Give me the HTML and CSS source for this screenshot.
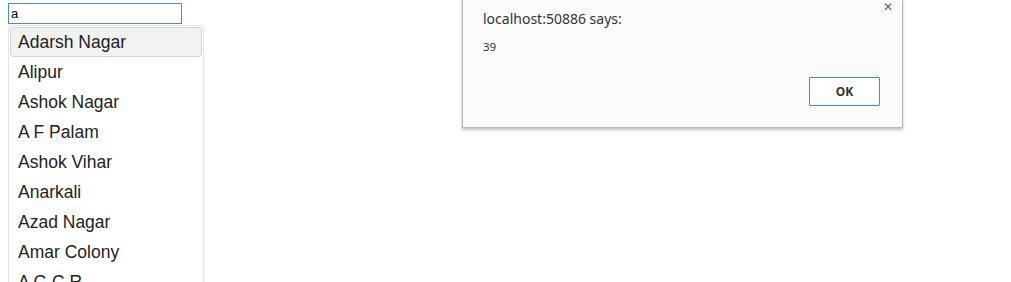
FILE: index.html
```html
<!DOCTYPE html>
<html>
<head>
<meta charset="utf-8">
<link rel="stylesheet" href="styles.css">
</head>
<body>
<div class="page">
  <input class="search" type="text" value="a">
  <ul class="menu">
    <li class="item active">Adarsh Nagar</li>
    <li class="item">Alipur</li>
    <li class="item">Ashok Nagar</li>
    <li class="item">A F Palam</li>
    <li class="item">Ashok Vihar</li>
    <li class="item">Anarkali</li>
    <li class="item">Azad Nagar</li>
    <li class="item">Amar Colony</li>
    <li class="item">A G C R</li>
  </ul>
</div>
<div class="dialog">
  <span class="close">&#x2715;</span>
  <div class="title">localhost:50886 says:</div>
  <div class="message">39</div>
  <div class="actions"><button class="ok">OK</button></div>
</div>
</body>
</html>
```
FILE: styles.css
```css
html, body {
  margin: 0;
  padding: 0;
  background: #fff;
  overflow: hidden;
  height: 282px;
}
.page {
  padding: 3px 0 0 8px;
  display: flex;
  flex-direction: column;
  align-items: flex-start;
}
.search {
  box-sizing: border-box;
  width: 174px;
  height: 21px;
  margin: 0;
  padding: 0 2px;
  border: 1px solid #4a8ad8;
  font-family: "Liberation Sans", Arial, sans-serif;
  font-size: 13px;
  color: #000;
  outline: none;
}
.menu {
  list-style: none;
  margin: 1px 0 0 0;
  padding: 1px;
  width: 196px;
  box-sizing: border-box;
  border: 1px solid #e6e6e6;
  border-radius: 4px;
  font-family: "Liberation Sans", Arial, sans-serif;
  font-size: 17.5px;
  color: #222;
}
.item {
  height: 28px;
  line-height: 28px;
  padding-left: 7px;
  border: 1px solid transparent;
  border-radius: 4px;
  white-space: nowrap;
}
.item.active {
  background: #f2f2f2;
  border-color: #d3d3d3;
}
.dialog {
  position: absolute;
  left: 462px;
  top: -2px;
  width: 441px;
  height: 130px;
  box-sizing: border-box;
  background: #fbfbfb;
  border: 1px solid #b8b8b8;
  box-shadow: 0 2px 3px rgba(0,0,0,0.25);
  padding: 10px 20px 0 20px;
  font-family: "Noto Sans", "Open Sans", sans-serif;
  color: #333;
}
.close {
  position: absolute;
  right: 9px;
  top: 1px;
  font-size: 12px;
  font-weight: bold;
  color: #666;
  font-family: "DejaVu Sans", sans-serif;
}
.title {
  font-size: 14px;
  line-height: 20px;
  color: #333;
}
.message {
  margin-top: 10px;
  font-size: 11.5px;
  line-height: 16px;
  color: #333;
}
.actions {
  display: flex;
  justify-content: flex-end;
  margin-top: 22px;
  padding-right: 2px;
}
.ok {
  -webkit-appearance: none;
  appearance: none;
  width: 71px;
  height: 29px;
  box-sizing: border-box;
  background: #fff;
  border: 1px solid #4a86e8;
  border-radius: 1px;
  font-family: "Noto Sans", "Open Sans", sans-serif;
  font-weight: bold;
  font-size: 12px;
  color: #333;
  padding: 0;
}
```
